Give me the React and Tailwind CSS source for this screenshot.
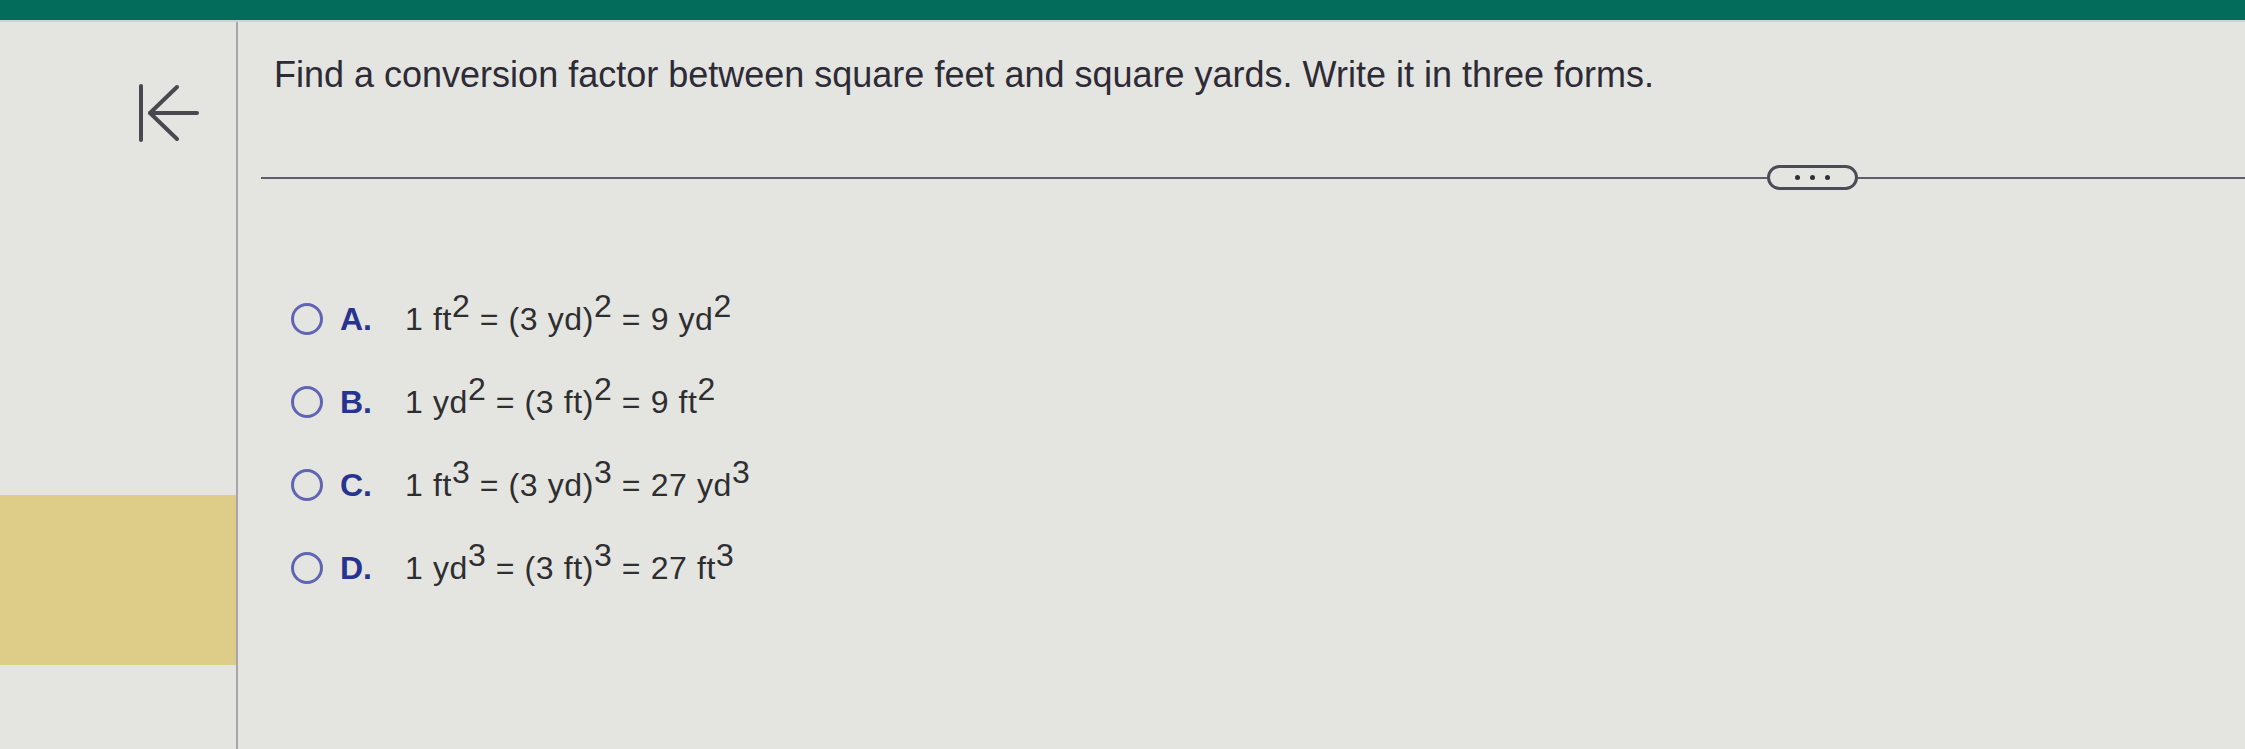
import React from "react";

const Sup = ({ children }) => (
  <span className="relative -top-[13px]">{children}</span>
);

const options = [
  { label: "A.", parts: ["1 ft", 2, " = (3 yd)", 2, " = 9 yd", 2] },
  { label: "B.", parts: ["1 yd", 2, " = (3 ft)", 2, " = 9 ft", 2] },
  { label: "C.", parts: ["1 ft", 3, " = (3 yd)", 3, " = 27 yd", 3] },
  { label: "D.", parts: ["1 yd", 3, " = (3 ft)", 3, " = 27 ft", 3] },
];

export default function App() {
  return (
    <div className="w-[2245px] h-[749px] overflow-hidden flex flex-col bg-[#e4e4e1] font-['Liberation_Sans',Arial,sans-serif]">
      <div className="h-[22px] shrink-0 bg-[#036c5a] border-b-2 border-[#cdd3d0]" />
      <div className="flex-1 flex min-h-0">
        <aside className="w-[238px] shrink-0 border-r-2 border-[#a6a6aa] flex flex-col">
          <svg
            className="ml-[130px] mt-[56px] shrink-0"
            width="70"
            height="64"
            viewBox="0 0 70 64"
            fill="none"
            stroke="#48484e"
            strokeWidth="4"
            strokeLinecap="round"
            strokeLinejoin="round"
          >
            <line x1="11" y1="8" x2="11" y2="62" />
            <line x1="20" y1="35" x2="67" y2="35" />
            <polyline points="47,9 20,35 47,61" />
          </svg>
          <div className="mt-[353px] h-[170px] bg-[#decd88]" />
        </aside>
        <main className="flex-1 flex flex-col pt-[35px]">
          <h1 className="ml-[36px] h-[36px] text-[36px] leading-[36px] font-normal text-[#2d2b35] whitespace-nowrap">
            Find a conversion factor between square feet and square yards. Write it in three forms.
          </h1>
          <div className="mt-[72px] ml-[23px] h-[25px] flex items-center">
            <div className="flex-1 h-[2px] bg-[#5e5d68]" />
            <div className="w-[91px] h-[25px] rounded-full border-[3px] border-[#4b4b55] flex items-center justify-center gap-[10px]">
              <span className="w-[5px] h-[5px] rounded-full bg-[#2f2f38]" />
              <span className="w-[5px] h-[5px] rounded-full bg-[#2f2f38]" />
              <span className="w-[5px] h-[5px] rounded-full bg-[#2f2f38]" />
            </div>
            <div className="w-[387px] h-[2px] bg-[#5e5d68]" />
          </div>
          <div className="mt-[113px] ml-[53px] flex flex-col gap-[51px]">
            {options.map((o) => (
              <div key={o.label} className="h-[32px] flex items-center">
                <span className="w-[32px] h-[32px] rounded-full border-[3px] border-[#5f64b4] shrink-0" />
                <span className="ml-[17px] w-[65px] text-[32px] leading-[32px] font-bold text-[#27348f]">
                  {o.label}
                </span>
                <span className="text-[32px] leading-[32px] tracking-[0.6px] text-[#2e2e30] whitespace-pre">
                  {o.parts.map((p, i) =>
                    typeof p === "number" ? <Sup key={i}>{p}</Sup> : <span key={i}>{p}</span>
                  )}
                </span>
              </div>
            ))}
          </div>
        </main>
      </div>
    </div>
  );
}
